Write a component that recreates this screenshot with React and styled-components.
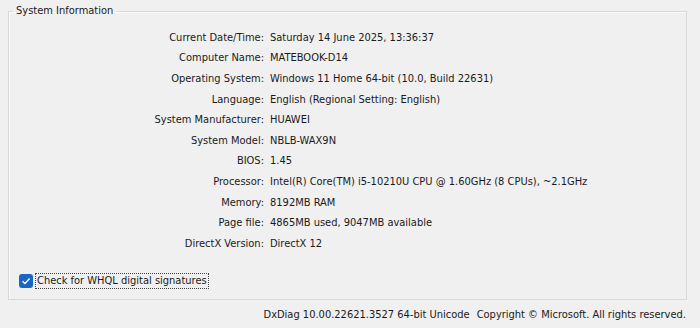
import React from 'react';
import styled, { createGlobalStyle } from 'styled-components';

const GlobalStyle = createGlobalStyle`
  html, body {
    margin: 0;
    padding: 0;
    background: #f0f0f0;
  }
  body {
    font-family: "DejaVu Sans Condensed", "Liberation Sans", sans-serif;
    font-size: 11px;
    color: #1a1a1a;
  }
`;

const info = [
  ['Current Date/Time', 'Saturday 14 June 2025, 13:36:37'],
  ['Computer Name', 'MATEBOOK-D14'],
  ['Operating System', 'Windows 11 Home 64-bit (10.0, Build 22631)'],
  ['Language', 'English (Regional Setting: English)'],
  ['System Manufacturer', 'HUAWEI'],
  ['System Model', 'NBLB-WAX9N'],
  ['BIOS', '1.45'],
  ['Processor', 'Intel(R) Core(TM) i5-10210U CPU @ 1.60GHz (8 CPUs), ~2.1GHz'],
  ['Memory', '8192MB RAM'],
  ['Page file', '4865MB used, 9047MB available'],
  ['DirectX Version', 'DirectX 12'],
];

export default function App() {
  return (
    <>
      <GlobalStyle />
      <Page>
        <GroupBox>
          <Legend>System Information</Legend>
          <InfoGrid>
            {info.map(([label, value]) => (
              <React.Fragment key={label}>
                <Label>{label}:</Label>
                <Value>{value}</Value>
              </React.Fragment>
            ))}
          </InfoGrid>
          <CheckRow>
            <CheckBox>
              <svg width="10" height="10" viewBox="0 0 10 10">
                <path d="M1.5 5.2 L4 7.5 L8.6 2.6" fill="none" stroke="#fff" strokeWidth="1.4" />
              </svg>
            </CheckBox>
            <CheckLabel>Check for WHQL digital signatures</CheckLabel>
          </CheckRow>
        </GroupBox>
        <Footer>
          <span>DxDiag 10.00.22621.3527 64-bit Unicode</span>
          <span>Copyright © Microsoft. All rights reserved.</span>
        </Footer>
      </Page>
    </>
  );
}

const Page = styled.div`
  width: 700px;
  height: 328px;
  padding: 4px 0 0 8px;
  box-sizing: border-box;
`;

const GroupBox = styled.fieldset`
  width: 679px;
  height: 296px;
  box-sizing: border-box;
  margin: 0;
  padding: 0;
  border: 1px solid #d9d9d9;
  box-shadow: inset 1px 1px 0 #fbfbfb;
  display: flex;
  flex-direction: column;
`;

const Legend = styled.legend`
  padding: 0 3px;
  margin-left: 4px;
  line-height: 14px;
`;

const InfoGrid = styled.div`
  display: grid;
  grid-template-columns: 255px 1fr;
  grid-auto-rows: 20.6px;
  column-gap: 6px;
  align-items: center;
  padding-top: 9px;
`;

const Label = styled.div`
  text-align: right;
  white-space: nowrap;
`;

const Value = styled.div`
  white-space: nowrap;
`;

const CheckRow = styled.div`
  display: flex;
  align-items: center;
  gap: 2px;
  margin-top: 19px;
  padding-left: 10px;
`;

const CheckBox = styled.span`
  width: 14px;
  height: 14px;
  border-radius: 3px;
  background: #1a66c2;
  display: flex;
  align-items: center;
  justify-content: center;
`;

const CheckLabel = styled.span`
  border: 1px dotted #444;
  padding: 0 1px;
  line-height: 14px;
`;

const Footer = styled.div`
  display: flex;
  justify-content: flex-end;
  gap: 7px;
  padding: 8px 14px 0 0;
  line-height: 14px;
`;
